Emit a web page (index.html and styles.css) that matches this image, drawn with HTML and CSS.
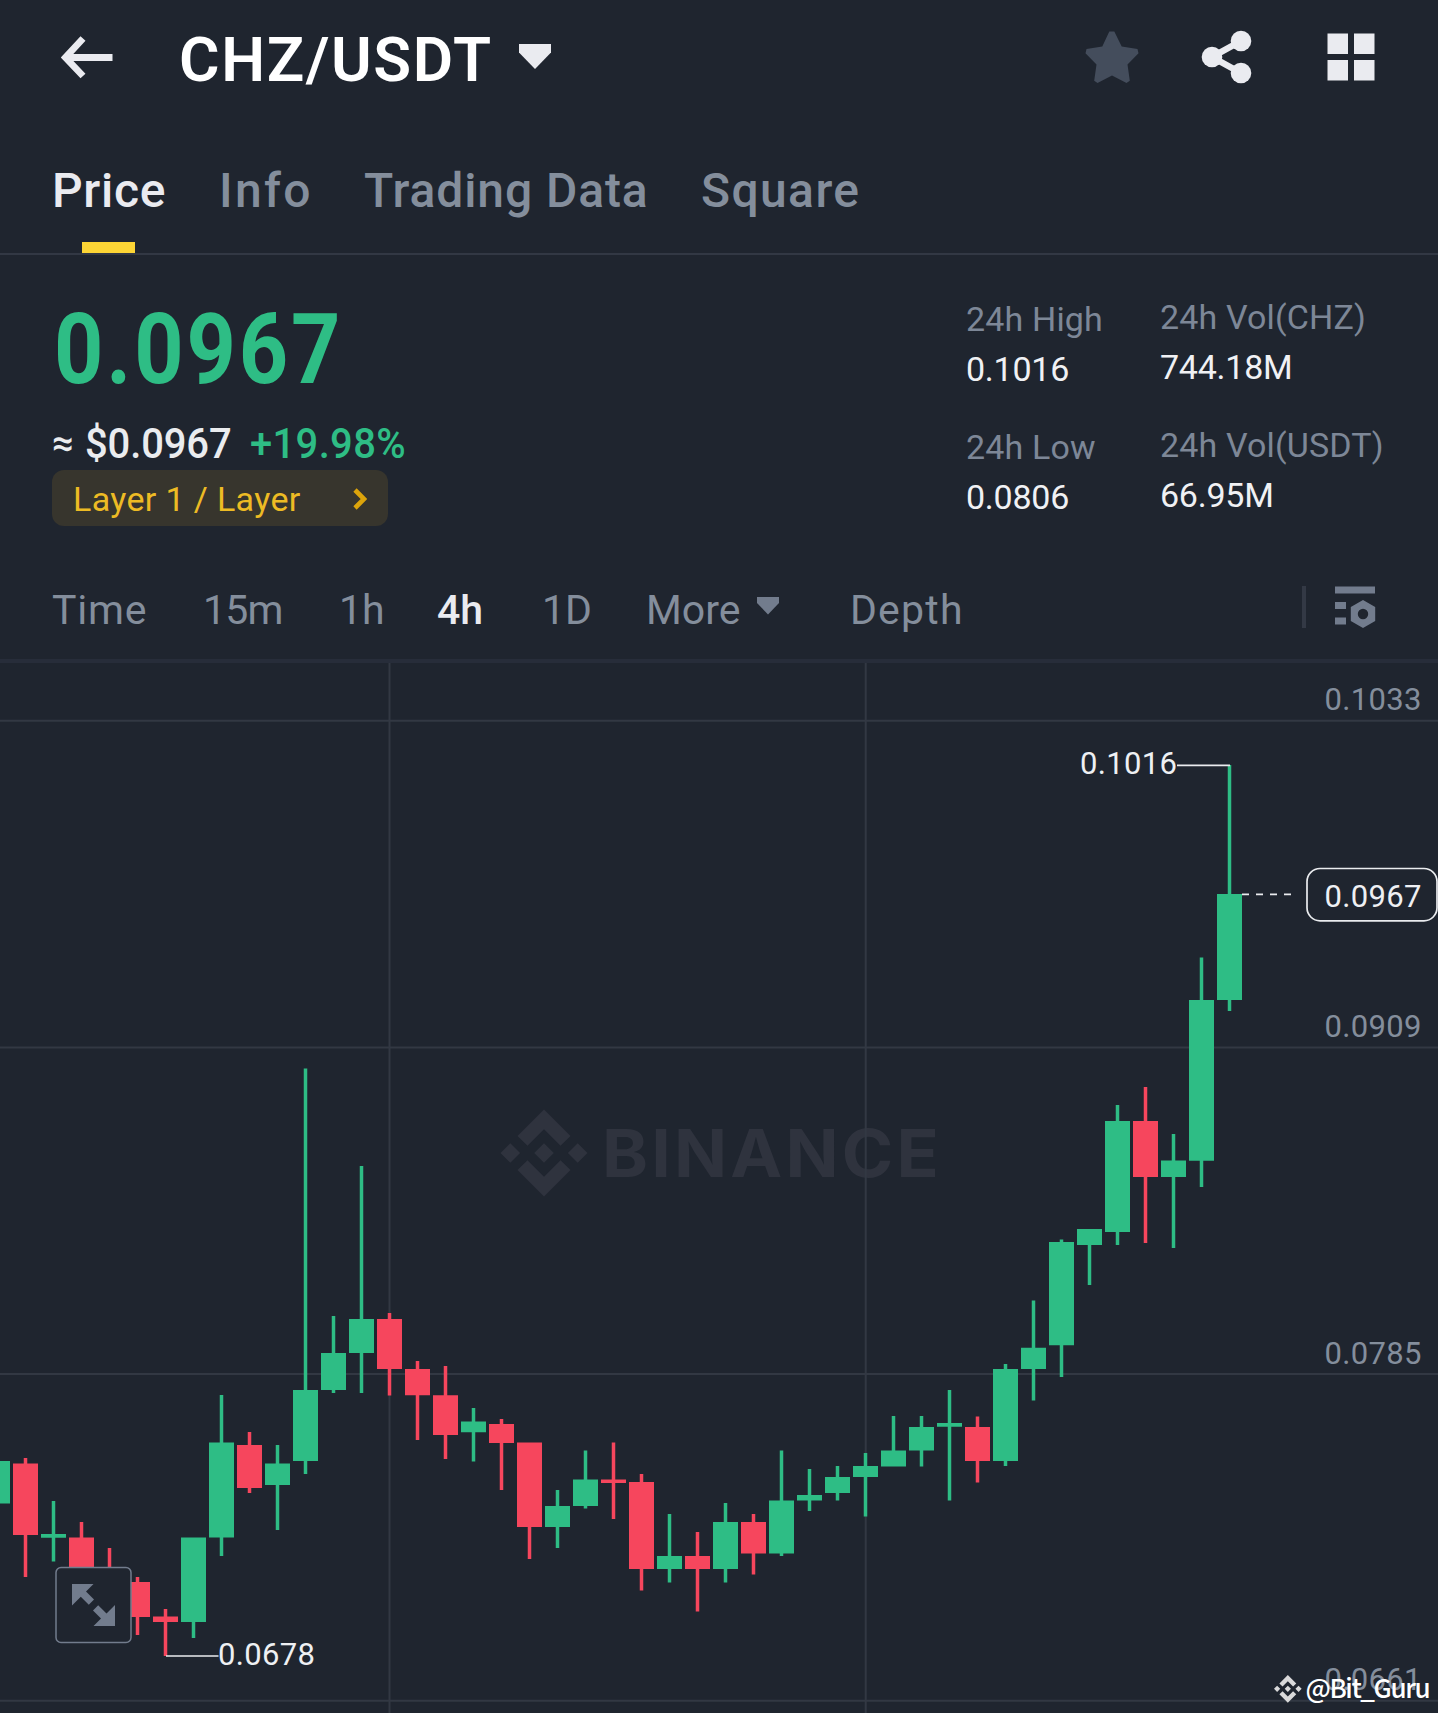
FILE: index.html
```html
<!DOCTYPE html>
<html lang="en">
<head>
<meta charset="utf-8">
<title>CHZ/USDT</title>
<link rel="stylesheet" href="styles.css">
</head>
<body>
<header class="topbar">
  <svg class="back" width="52" height="44" viewBox="0 0 52 44"><path d="M22 3.500 4.500 22.500l17.500 18.500M4.500 22.500H51.500"/></svg>
  <h1 class="pair">CHZ/USDT</h1>
  <svg class="caret" width="32" height="26" viewBox="0 0 32 26"><path d="M0 0h32v8.500L16 25 0 8.500z"/></svg>
  <div class="actions">
    <svg width="54" height="54" viewBox="0 0 54 54"><path class="star" d="M24.300 1.500h5l7.400 15 15.800 2.600 1 4.200-11 11.200 2.300 16.200-3.300 2.300L27 45.500 12.500 53l-3.300-2.300 2.300-16.200L.5 23.300l1-4.200 15.800-2.600z"/></svg>
    <svg width="54" height="54" viewBox="0 0 54 54"><path class="link" d="M42 11 13 27l29 16"/><circle cx="42" cy="11" r="10.300"/><circle cx="13" cy="27" r="10.300"/><circle cx="42" cy="43" r="10.300"/></svg>
    <svg width="48" height="48" viewBox="0 0 48 48"><path d="M.5.5h20.500v20.500H.5zM27 .5h20.500v20.500H27zM.5 27h20.500v20.500H.5zM27 27h20.500v20.500H27z"/></svg>
  </div>
</header>

<nav class="tabs">
  <span class="tab active">Price</span>
  <span class="tab info">Info</span>
  <span class="tab">Trading Data</span>
  <span class="tab square">Square</span>
</nav>

<section class="summary">
  <div class="quote">
    <div class="price">0.0967</div>
    <div class="fiat"><span class="approx">≈</span><span class="usd">$0.0967</span><span class="change">+19.98%</span></div>
    <div class="badge"><span>Layer 1 / Layer</span><svg width="14" height="22" viewBox="0 0 14 22"><path d="m2 2 9 9-9 9"/></svg></div>
  </div>
  <dl class="stats">
    <div class="stat"><dt>24h High</dt><dd>0.1016</dd></div>
    <div class="stat"><dt>24h Low</dt><dd>0.0806</dd></div>
  </dl>
  <dl class="stats volume">
    <div class="stat"><dt>24h Vol(CHZ)</dt><dd>744.18M</dd></div>
    <div class="stat"><dt>24h Vol(USDT)</dt><dd>66.95M</dd></div>
  </dl>
</section>

<nav class="intervals">
  <span class="wide">Time</span><span class="tight">15m</span><span>1h</span><span class="active">4h</span><span>1D</span>
  <span class="more">More<svg width="22" height="18" viewBox="0 0 22 18"><path d="M0 0h22v6L11 17.500 0 6z"/></svg></span>
  <span class="depth">Depth</span>
  <i class="divider"></i>
  <svg class="settings" width="41" height="42" viewBox="0 0 41 42"><path fill-rule="evenodd" d="M0 .5h40v7H0zM0 16h11v7H0zM0 31.500h11v7H0zM28 14l12.200 7v14L28 42l-12.200-7V21zM28 22.800a5.200 5.200 0 1 0 0 10.400 5.200 5.200 0 0 0 0-10.400z"/></svg>
</nav>

<main class="chart">
<svg width="1438" height="1050" viewBox="0 663 1438 1050">
  <defs>
    <g id="logo">
      <path d="M43.500 0 70 26.500 60 36.200 43.500 19.700 27 36.200 17 26.500zM43.500 87 17 60.500l10-9.700 16.500 16.500L60 50.800l10 9.700zM9.800 33.700l9.800 9.800-9.800 9.800L0 43.500zM43.500 33.700l9.800 9.800-9.800 9.800-9.800-9.800zM77.200 33.700l9.800 9.800-9.800 9.800-9.800-9.800z"/>
    </g>
  </defs>
  <g class="brand">
    <use href="#logo" x="500.500" y="1109.500"/>
    <text x="602" y="1177" textLength="340" lengthAdjust="spacingAndGlyphs">BINANCE</text>
  </g>
  <path class="grid" d="M0 720.800H1438M0 1047.400H1438M0 1374H1438M0 1700.700H1438M389.500 663V1713M865.700 663V1713"/>

  <path class="wick up" d="M53.500 1501V1561.500M193.500 1538V1638M221.500 1395V1556M277.500 1445V1530M305.500 1068.500V1474M333.500 1316V1393M361.500 1166V1393M473.500 1408V1461.500M557.500 1490V1548M585.500 1450.500V1508.500M669.500 1514V1582.500M725.500 1503V1582.500M781.500 1450.500V1556M809.500 1469V1511M837.500 1466V1500.500M865.500 1453V1516.500M893.500 1416V1466M921.500 1416V1466.500M949.500 1390V1500.500M1005.500 1364V1466M1033.500 1300.500V1400.500M1061.500 1239.500V1377M1089.500 1229V1285M1117.500 1105V1245M1173.500 1134V1248M1201.500 957.500V1187M1229.500 765V1011"/>
  <path class="wick down" d="M25.500 1458V1577M81.500 1522V1575M109.500 1548V1590M137.500 1577V1635M165.500 1609V1656M249.500 1432V1493M389.500 1313V1395.500M417.500 1361V1440M445.500 1366V1459M501.500 1419V1490M529.500 1443V1559M613.500 1442.500V1519M641.500 1474V1590.500M697.500 1532V1611.500M753.500 1514V1574.500M977.500 1416.500V1482.500M1145.500 1087V1243"/>
  <path class="body up" d="M-2.500 1461V1503.500M53.500 1534V1537.700M193.500 1537.500V1622M221.500 1442.500V1537.500M277.500 1463.500V1485M305.500 1390V1461M333.500 1353V1390M361.500 1319V1353M473.500 1421.500V1432.300M557.500 1506V1527M585.500 1479.500V1506M669.500 1556V1569M725.500 1522V1569M781.500 1500.500V1553.500M809.500 1495V1500.500M837.500 1477V1493M865.500 1466V1477M893.500 1450.500V1466.500M921.500 1427V1450.500M949.500 1423V1426.800M1005.500 1369V1461M1033.500 1347.700V1369M1061.500 1242V1345.300M1089.500 1229V1245M1117.500 1121V1232M1173.500 1160.500V1177M1201.500 1000V1160.700M1229.500 894V1000"/>
  <path class="body down" d="M25.500 1463.500V1535M81.500 1537.500V1575M109.500 1575V1590M137.500 1582V1617M165.500 1616.500V1622M249.500 1445V1488M389.500 1319V1369M417.500 1369V1395.300M445.500 1395.300V1435M501.500 1424V1443M529.500 1442.500V1527M613.500 1479.500V1483M641.500 1482V1569M697.500 1556V1569M753.500 1522V1553.500M977.500 1427V1461M1145.500 1121V1177"/>

  <g class="axis">
    <text x="1324.500" y="710" textLength="97">0.1033</text>
    <text x="1324.500" y="1037" textLength="97">0.0909</text>
    <text x="1324.500" y="1364" textLength="97">0.0785</text>
    <text x="1324.500" y="1690" textLength="97">0.0661</text>
  </g>
  <path class="callout" d="M1177 765.400H1230M166 1656H218.500"/>
  <path class="callout dashed" d="M1242 894.300H1291.500"/>
  <rect class="callout" x="1307" y="868.500" width="130" height="52.300" rx="13"/>
  <g class="mark">
    <text x="1080" y="773.700" textLength="97">0.1016</text>
    <text x="1324.500" y="906.700" textLength="97">0.0967</text>
    <text x="218" y="1664.500" textLength="97">0.0678</text>
  </g>

  <g class="expand">
    <rect x="56" y="1567.500" width="75" height="75" rx="5"/>
    <path d="M72 1584h21.500l-7.500 7.500 8 8-5.200 5.200-8-8L72 1605.500zM115 1626H93.500l7.500-7.500-8-8 5.200-5.200 8.300 8.200 8.500-8.500z"/>
  </g>

  <g class="author">
    <use href="#logo" transform="translate(1274 1675) scale(.318)"/>
    <text x="1305.500" y="1698" textLength="125">@Bit_Guru</text>
  </g>
</svg>
</main>
</body>
</html>
```
FILE: styles.css
```css
* { box-sizing: border-box; margin: 0; padding: 0; }
body {
  width: 1438px;
  height: 1713px;
  overflow: hidden;
  background: #1f252f;
  color: #eaecef;
  font-family: Roboto, "Noto Sans", sans-serif;
  white-space: nowrap;
}
svg { display: block; flex: none; fill: #eaebf0; }

.topbar { display: flex; align-items: center; height: 114px; padding: 0 63px 0 61px; }
.back path { fill: none; stroke: #eaebf0; stroke-width: 6.800; }
.pair { width: 310px; margin-left: 66px; font-size: 62px; font-weight: 600; line-height: 76px; color: #fff; padding-top: 5px; letter-spacing: 1.600px; }
.caret { margin-left: 30px; }
.actions { display: flex; align-items: center; margin-left: auto; }
.actions svg + svg { margin-left: 60px; }
.actions svg:last-child { margin-left: 74px; }
.star { fill: #444d5c; }
.link { fill: none; stroke: #eaebf0; stroke-width: 6.500; }

.tabs {
  display: grid;
  grid-template-columns: 167px 145px 337px 1fr;
  height: 141px;
  padding-left: 52px;
  border-bottom: 2px solid #323844;
  font-size: 48px;
  font-weight: 500;
  color: #848e9c;
  letter-spacing: .900px;
}
.tab { padding-top: 49px; line-height: 56px; }
.tab.info { letter-spacing: 2.300px; }
.tab.square { letter-spacing: 1.400px; }
.tab.active { color: #eaebf0; letter-spacing: .700px; display: flex; flex-direction: column; justify-content: space-between; }
.tab.active::after { content: ""; width: 53px; height: 11px; margin-left: 30px; background: #fcd535; }

.summary { display: flex; height: 315px; padding-left: 52px; }
.quote { width: 914px; }
.price {
  margin: 44px 0 0 2px;
  font-size: 99px;
  font-weight: 700;
  line-height: 100px;
  color: #2ebd85;
  letter-spacing: 3.300px;
  transform: scaleX(.87);
  transform-origin: 0 50%;
}
.fiat { display: flex; margin-top: 18px; height: 53px; align-items: center; font-size: 43px; font-weight: 500; line-height: 53px; }
.approx { width: 33px; font-size: 38px; }
.usd { width: 165px; letter-spacing: -.150px; }
.usd, .change { transform: scaleX(.93); transform-origin: 0 50%; }
.change { color: #2ebd85; letter-spacing: .350px; }
.badge {
  display: flex;
  align-items: center;
  justify-content: space-between;
  width: 336px;
  height: 56px;
  padding: 2px 21px 0 21px;
  border-radius: 12px;
  background: #37352d;
  color: #edbb24;
  font-size: 34px;
  letter-spacing: .350px;
}
.badge path { fill: none; stroke: #dca40b; stroke-width: 4.600; }

.stats { width: 194px; padding-top: 44px; font-size: 34px; line-height: 40px; }
.volume { padding-top: 42px; width: 260px; }
.stat { height: 128px; }
dt { color: #7d8797; letter-spacing: .150px; }
dd { margin-top: 10px; color: #f0f1f4; letter-spacing: -.250px; }

.intervals {
  display: grid;
  grid-template-columns: 151px 136px 98px 105px 104px 204px 451px 33px 41px;
  height: 93px;
  padding-left: 52px;
  border-bottom: 4px solid #272d3a;
  font-size: 41px;
  line-height: 48px;
  padding-top: 16px;
  color: #848e9c;
}
.intervals .active { color: #eaebf0; font-weight: 500; }
.intervals .wide { letter-spacing: .800px; }
.intervals .depth { letter-spacing: 1.200px; }
.intervals .tight { letter-spacing: -.800px; }
.intervals svg { fill: #727c8d; }
.more { display: flex; }
.more svg { margin: 11px 0 0 17px; }
.divider { width: 4px; height: 42px; margin-left: 1px; background: #333945; }
.intervals .settings { margin-left: 1px; }

.chart { height: 1050px; }
.grid { fill: none; stroke: #323843; stroke-width: 2; }
.brand { fill: #2f333e; font: 700 66px Inter, sans-serif; }
.brand text { letter-spacing: 3px; }
.wick { fill: none; stroke-width: 3.500; }
.body { fill: none; stroke-width: 25; }
.up { stroke: #2ebd85; }
.down { stroke: #f6465d; }
.axis, .mark { font-size: 31px; fill: #848e9c; }
.mark { fill: #eef0f3; }
.callout { fill: none; stroke: #eaecef; stroke-width: 1.700; }
.dashed { stroke-dasharray: 7; }
.expand { fill: #727c8d; }
.expand rect { fill: #1f252f; stroke: #727c8d; stroke-width: 1.500; }
.author { fill: #d9d9da; font: 500 26px "Noto Sans CJK SC", sans-serif; }
.author text { fill: #fff; }
```
